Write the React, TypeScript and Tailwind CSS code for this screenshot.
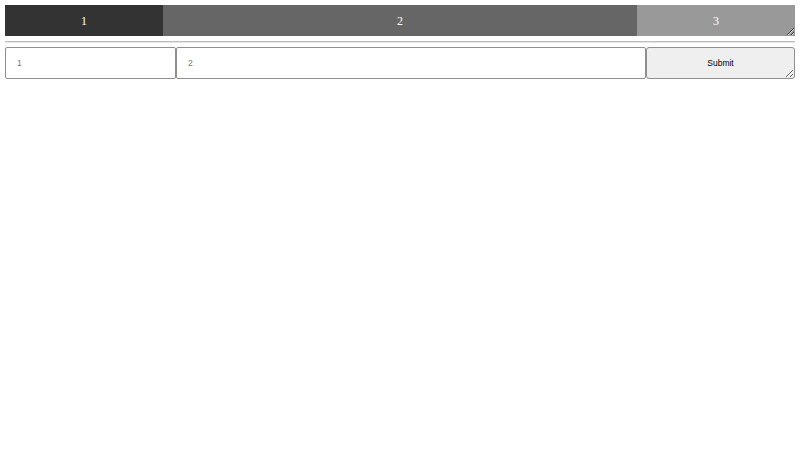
import React from 'react'

export default function App() {
  return (
    <div className="min-h-[450px] bg-white p-[5px]">
      <div className="flex h-[31px] w-full resize overflow-auto font-['Liberation_Serif',serif] text-[12px] text-white">
        <div className="flex w-[20%] items-center justify-center bg-[#333333]">1</div>
        <div className="flex w-[60%] items-center justify-center bg-[#666666]">2</div>
        <div className="flex w-[20%] items-center justify-center bg-[#999999]">3</div>
      </div>
      <hr className="mt-[5px] border-t border-b border-t-[#bdbdbd] border-b-[#e6e6e6]" />
      <div className="mt-[4px] flex h-[32px] font-['Liberation_Sans',sans-serif] text-[8.5px]">
        <input
          className="w-[171px] rounded-[2px] border border-[#8f8f8f] px-[11px] text-[#666] placeholder:text-[#777777]"
          placeholder="1"
        />
        <input
          className="w-[470px] rounded-[2px] border border-[#8f8f8f] px-[11px] text-[#666] placeholder:text-[#777777]"
          placeholder="2"
        />
        <button className="flex-1 resize overflow-auto rounded-[3px] border border-[#8f8f8f] bg-[#efefef] text-black">
          Submit
        </button>
      </div>
    </div>
  )
}
